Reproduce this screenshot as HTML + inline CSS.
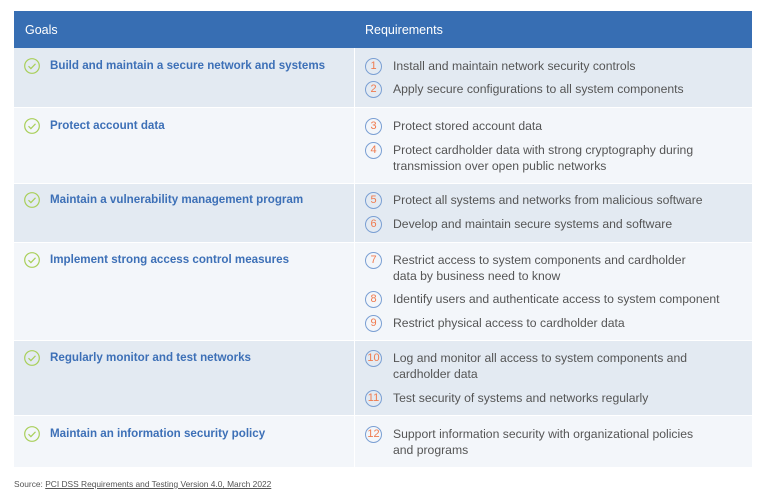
<!DOCTYPE html><html><head><style>
body{margin:0;width:768px;height:497px;background:#fff;font-family:"Liberation Sans",sans-serif;position:relative;overflow:hidden}
.a{position:absolute}
.hd{left:14px;top:11px;width:738px;height:37px;background:#376eb3}
.hd span{position:absolute;top:12px;color:#fff;font-size:12.5px}
.row{left:14px;width:738px}
.div{position:absolute;left:340px;top:0;bottom:0;width:1px;background:#fff}
.g{position:absolute;left:50px;color:#3d70b7;font-weight:bold;font-size:11.6px;line-height:16px}
.ck{position:absolute;left:24px;width:16px;height:16px}
.r{position:absolute;left:393px;color:#555;font-size:12.2px;line-height:16px}
.n{position:absolute;left:365px;width:15px;height:15px;border:1px solid #7a9fd3;border-radius:50%;color:#f07a4e;font-size:11px;line-height:15px;text-align:center}
</style></head><body>
<div class="a hd"><span style="left:11px">Goals</span><span style="left:351px">Requirements</span></div>
<div class="a row" style="top:48px;height:59px;background:#e3eaf2"><div class="div"></div></div>
<div class="a row" style="top:108px;height:75px;background:#f3f6fa"><div class="div"></div></div>
<div class="a row" style="top:184px;height:58px;background:#e3eaf2"><div class="div"></div></div>
<div class="a row" style="top:243px;height:97px;background:#f3f6fa"><div class="div"></div></div>
<div class="a row" style="top:341px;height:74px;background:#e3eaf2"><div class="div"></div></div>
<div class="a row" style="top:416px;height:51px;background:#f3f6fa"><div class="div"></div></div>

<svg class="ck" style="top:58px" viewBox="0 0 16 16"><circle cx="8" cy="8" r="7.3" fill="none" stroke="#a9cf5a" stroke-width="1.2"/><path d="M4.5 8.2l2.4 2.4 4.6-4.8" fill="none" stroke="#a9cf5a" stroke-width="1.2"/></svg>
<div class="g" style="top:58px">Build and maintain a secure network and systems</div>
<svg class="ck" style="top:118px" viewBox="0 0 16 16"><circle cx="8" cy="8" r="7.3" fill="none" stroke="#a9cf5a" stroke-width="1.2"/><path d="M4.5 8.2l2.4 2.4 4.6-4.8" fill="none" stroke="#a9cf5a" stroke-width="1.2"/></svg>
<div class="g" style="top:118px">Protect account data</div>
<svg class="ck" style="top:192px" viewBox="0 0 16 16"><circle cx="8" cy="8" r="7.3" fill="none" stroke="#a9cf5a" stroke-width="1.2"/><path d="M4.5 8.2l2.4 2.4 4.6-4.8" fill="none" stroke="#a9cf5a" stroke-width="1.2"/></svg>
<div class="g" style="top:192px">Maintain a vulnerability management program</div>
<svg class="ck" style="top:252px" viewBox="0 0 16 16"><circle cx="8" cy="8" r="7.3" fill="none" stroke="#a9cf5a" stroke-width="1.2"/><path d="M4.5 8.2l2.4 2.4 4.6-4.8" fill="none" stroke="#a9cf5a" stroke-width="1.2"/></svg>
<div class="g" style="top:252px">Implement strong access control measures</div>
<svg class="ck" style="top:350px" viewBox="0 0 16 16"><circle cx="8" cy="8" r="7.3" fill="none" stroke="#a9cf5a" stroke-width="1.2"/><path d="M4.5 8.2l2.4 2.4 4.6-4.8" fill="none" stroke="#a9cf5a" stroke-width="1.2"/></svg>
<div class="g" style="top:350px">Regularly monitor and test networks</div>
<svg class="ck" style="top:426px" viewBox="0 0 16 16"><circle cx="8" cy="8" r="7.3" fill="none" stroke="#a9cf5a" stroke-width="1.2"/><path d="M4.5 8.2l2.4 2.4 4.6-4.8" fill="none" stroke="#a9cf5a" stroke-width="1.2"/></svg>
<div class="g" style="top:426px">Maintain an information security policy</div>

<div class="n" style="top:58px">1</div><div class="r" style="top:58px">Install and maintain network security controls</div>
<div class="n" style="top:81px">2</div><div class="r" style="top:81px">Apply secure configurations to all system components</div>
<div class="n" style="top:118px">3</div><div class="r" style="top:118px">Protect stored account data</div>
<div class="n" style="top:142px">4</div><div class="r" style="top:142px">Protect cardholder data with strong cryptography during<br>transmission over open public networks</div>
<div class="n" style="top:192px">5</div><div class="r" style="top:192px">Protect all systems and networks from malicious software</div>
<div class="n" style="top:216px">6</div><div class="r" style="top:216px">Develop and maintain secure systems and software</div>
<div class="n" style="top:252px">7</div><div class="r" style="top:252px">Restrict access to system components and cardholder<br>data by business need to know</div>
<div class="n" style="top:291px">8</div><div class="r" style="top:291px">Identify users and authenticate access to system component</div>
<div class="n" style="top:315px">9</div><div class="r" style="top:315px">Restrict physical access to cardholder data</div>
<div class="n" style="top:350px">10</div><div class="r" style="top:350px">Log and monitor all access to system components and<br>cardholder data</div>
<div class="n" style="top:390px">11</div><div class="r" style="top:390px">Test security of systems and networks regularly</div>
<div class="n" style="top:426px">12</div><div class="r" style="top:426px">Support information security with organizational policies<br>and programs</div>

<div class="a" style="left:14px;top:479px;font-size:8.4px;color:#555">Source: <span style="text-decoration:underline">PCI DSS Requirements and Testing Version 4.0, March 2022</span></div>
</body></html>
